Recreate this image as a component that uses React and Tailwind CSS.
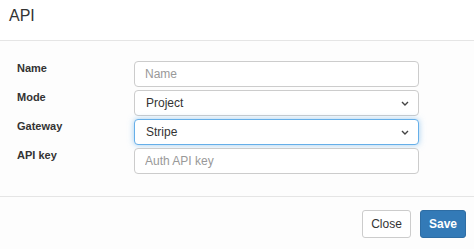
import React from "react";

const Chevron = () => (
  <svg width="8" height="5" viewBox="0 0 8 5" className="absolute right-[10px] top-[11px] pointer-events-none">
    <path d="M1 1 L4 4 L7 1" fill="none" stroke="#444" strokeWidth="1.4" />
  </svg>
);

function Row({ label, children }) {
  return (
    <div className="flex h-[26px]">
      <div className="w-[117px] text-[11px] font-bold text-[#333] leading-[13px] pt-[1px]">{label}</div>
      <div className="relative w-[285px]">{children}</div>
    </div>
  );
}

export default function App() {
  return (
    <div className="w-[474px] h-[249px] bg-white flex flex-col" style={{ fontFamily: '"Liberation Sans", Arial, sans-serif' }}>
      <div className="h-[41px] border-b border-[#e5e5e5] flex items-center px-[9px]">
        <h1 className="text-[16px] text-[#333] leading-none -mt-[8px]">API</h1>
      </div>
      <div className="flex-1 bg-[#fdfdfd] pt-[20px] pl-[17px] flex flex-col gap-[3px]">
        <Row label="Name">
          <input
            placeholder="Name"
            className="w-full h-full border border-[#ccc] rounded-[4px] px-[10px] text-[12px] text-[#555] placeholder-[#999] bg-white outline-none"
          />
        </Row>
        <Row label="Mode">
          <div className="w-full h-full border border-[#ccc] rounded-[4px] pl-[11px] text-[12px] text-[#333] bg-white flex items-center">
            Project
          </div>
          <Chevron />
        </Row>
        <Row label="Gateway">
          <div className="w-full h-full border border-[#66afe9] rounded-[4px] pl-[11px] text-[12px] text-[#333] bg-white flex items-center shadow-[0_0_6px_rgba(102,175,233,0.6)]">
            Stripe
          </div>
          <Chevron />
        </Row>
        <Row label="API key">
          <input
            placeholder="Auth API key"
            className="w-full h-full border border-[#ccc] rounded-[4px] px-[10px] text-[12px] text-[#555] placeholder-[#999] bg-white outline-none"
          />
        </Row>
      </div>
      <div className="h-[53px] border-t border-[#e5e5e5] bg-[#fdfdfd] flex items-start justify-end pt-[13px] pr-[8px] gap-[9px]">
        <button className="h-[28px] w-[49px] border border-[#ccc] rounded-[3px] bg-white text-[12px] text-[#333]">Close</button>
        <button className="h-[28px] w-[46px] border border-[#2e6da4] rounded-[3px] bg-[#337ab7] text-[12px] text-white font-semibold">Save</button>
      </div>
    </div>
  );
}
